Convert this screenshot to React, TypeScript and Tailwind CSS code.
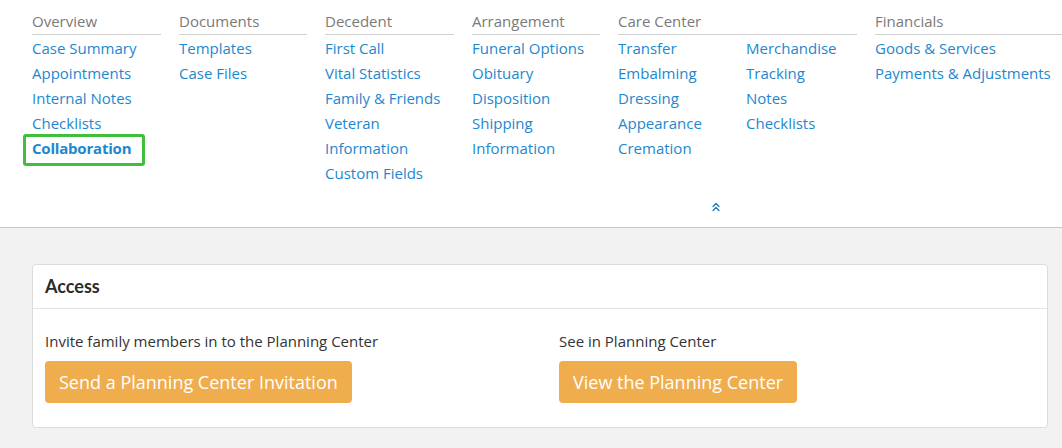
import { ChevronsUp } from "lucide-react";

type Col = { title: string; width: string; groups: string[][] };

const columns: Col[] = [
  { title: "Overview", width: "w-[129px]", groups: [["Case Summary", "Appointments", "Internal Notes", "Checklists", "Collaboration"]] },
  { title: "Documents", width: "w-[128px]", groups: [["Templates", "Case Files"]] },
  { title: "Decedent", width: "w-[129px]", groups: [["First Call", "Vital Statistics", "Family & Friends", "Veteran", "Information", "Custom Fields"]] },
  { title: "Arrangement", width: "w-[128px]", groups: [["Funeral Options", "Obituary", "Disposition", "Shipping", "Information"]] },
  {
    title: "Care Center",
    width: "w-[239px]",
    groups: [
      ["Transfer", "Embalming", "Dressing", "Appearance", "Cremation"],
      ["Merchandise", "Tracking", "Notes", "Checklists"],
    ],
  },
  { title: "Financials", width: "w-[200px]", groups: [["Goods & Services", "Payments & Adjustments"]] },
];

function NavLink({ label, active }: { label: string; active?: boolean }) {
  if (active) {
    return (
      <div className="relative leading-[25px]">
        <a className="font-bold text-[#1d87cf] tracking-[-0.2px]">{label}</a>
        {/* highlight box drawn over the link */}
        <span className="absolute left-[-9px] top-[-2px] w-[122px] h-[32px] border-[3px] border-[#40bf3c] rounded-[3px]"></span>
      </div>
    );
  }
  return <a className="block leading-[25px] text-[#1d87cf] whitespace-nowrap">{label}</a>;
}

export default function App() {
  return (
    <div className="w-[1062px] h-[448px] overflow-hidden bg-[#f2f2f2]" style={{ fontFamily: '"Open Sans", "Noto Sans", sans-serif' }}>
      {/* Case menu */}
      <header className="bg-white border-b border-[#c8c8c8] h-[228px] flex flex-col text-[15px]">
        <nav className="flex gap-[18px] pl-[32px] pt-[11px]">
          {columns.map((col) => (
            <div key={col.title} className={`${col.width} shrink-0`}>
              <div className="text-[#7a7a7a] leading-[21px] pb-[2px] border-b border-[#cfcfcf] whitespace-nowrap">{col.title}</div>
              <div className="flex pt-[1px]">
                {col.groups.map((g, i) => (
                  <div key={i} className="w-[128px] shrink-0">
                    {g.map((l) => (
                      <NavLink key={l} label={l} active={l === "Collaboration"} />
                    ))}
                  </div>
                ))}
              </div>
            </div>
          ))}
        </nav>
        <div className="flex-1 flex items-end justify-center pb-[13px] pl-[370px]">
          <ChevronsUp size={14} strokeWidth={2.5} className="text-[#1d7fc4]" />
        </div>
      </header>

      <main className="px-[32px] pt-[36px]">
        <section className="bg-white border border-[#dcdcdc] rounded-[4px] w-[1016px]">
          <div className="h-[44px] flex items-center px-[12px] border-b border-[#e3e3e3]">
            <h2 className="text-[18px] font-bold text-[#2b2b2b]" style={{ fontFamily: 'Lato, "Open Sans", sans-serif' }}>Access</h2>
          </div>
          <div className="flex px-[12px] pt-[22px] pb-[24px] text-[15px]">
            <div className="w-[514px]">
              <p className="leading-[20px] text-[#333]">Invite family members in to the Planning Center</p>
              <button className="mt-[10px] h-[42px] px-[14px] rounded-[4px] bg-[#f0ad4e] text-white text-[18px]">Send a Planning Center Invitation</button>
            </div>
            <div>
              <p className="leading-[20px] text-[#333]">See in Planning Center</p>
              <button className="mt-[10px] h-[42px] px-[14px] rounded-[4px] bg-[#f0ad4e] text-white text-[18px]">View the Planning Center</button>
            </div>
          </div>
        </section>
      </main>
    </div>
  );
}
